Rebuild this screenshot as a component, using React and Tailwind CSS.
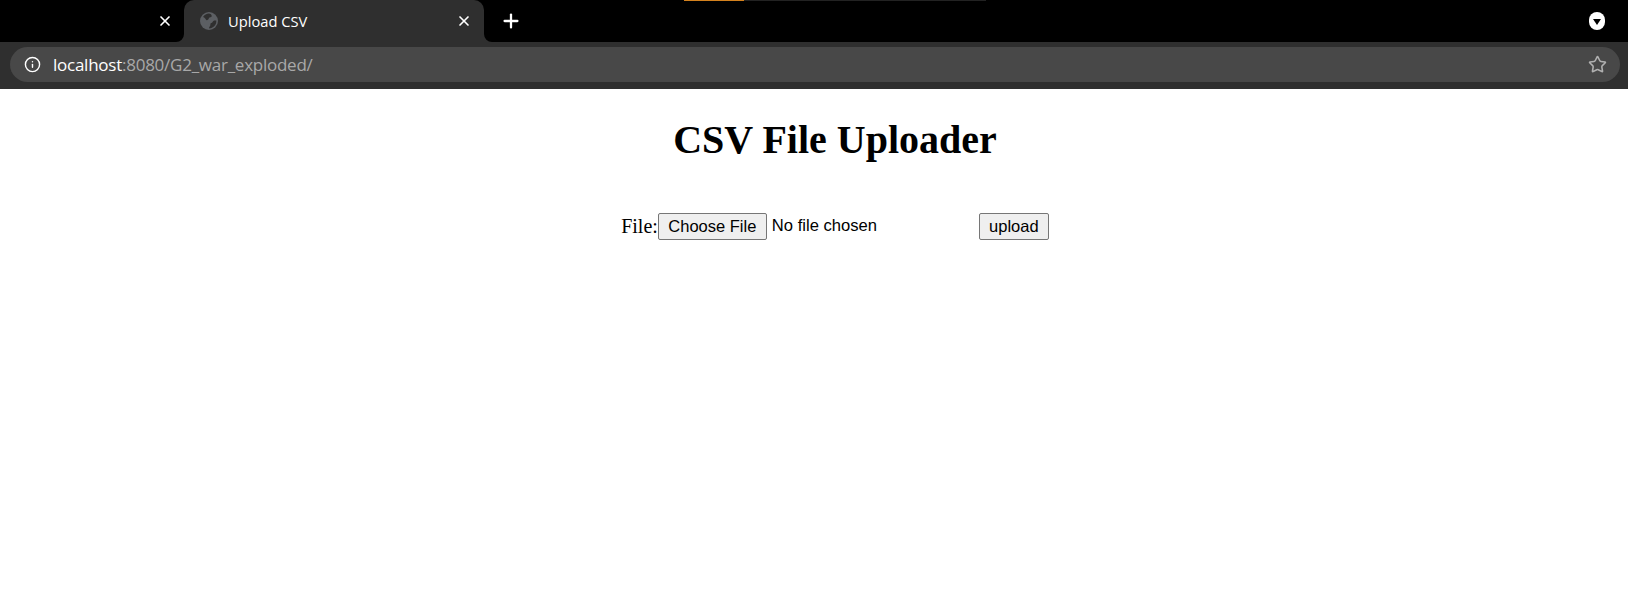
import React from 'react';
import { X, Plus, Star, Info } from 'lucide-react';

const TabCorner = ({ side }) => (
  <svg
    width="8"
    height="8"
    viewBox="0 0 8 8"
    className={`absolute bottom-0 ${side === 'left' ? 'left-[-8px]' : 'right-[-8px]'}`}
  >
    <path d={side === 'left' ? 'M8 0V8H0A8 8 0 0 0 8 0Z' : 'M0 0V8H8A8 8 0 0 1 0 0Z'} fill="#2f2f2f" />
  </svg>
);

// default favicon: a filled earth with dark land shapes
const EarthIcon = () => (
  <svg width="18" height="18" viewBox="0 0 18 18" className="shrink-0">
    <circle cx="9" cy="9" r="9" fill="#5c5f63" />
    <path d="M9 1.6C6.5 1.8 4.4 3 3 4.9c.9.2 1.5.9 2.2 1.5.6.5.5 1.2 1.1 1.6.8.5 1.8-.1 2.3-.9.3-.5.2-1.1.7-1.5.7-.5 1.6-.3 2.2-.9.4-.5.2-1.1-.1-1.6C10.9 2.1 10 1.7 9 1.6Z" fill="#2f2f2f" />
    <path d="M16.3 8.6c-.7-.3-1.6-.3-2.3 0-.8.4-1 1.3-1.7 1.8-.5.4-1.2.4-1.6.9-.5.7-.2 1.6-.5 2.4-.2.6-.8 1-1 1.6-.1.4 0 .8.1 1.1 3.8-.1 6.9-3 7-6.8 0-.3 0-.7 0-1Z" fill="#2f2f2f" />
  </svg>
);

const App = () => {
  return (
    <div className="min-h-[612px] bg-white font-['Liberation_Serif',serif] text-black">
      {/* Browser chrome */}
      <div className="bg-[#2f2f2f] h-[89px] flex flex-col">
        <div className="relative h-[42px] bg-black flex items-end pl-[184px] font-['Open_Sans',sans-serif]">
          <div className="absolute top-0 left-[684px] w-[302px] h-px bg-[#222222]">
            <div className="w-[60px] h-px bg-[#d4821e]" />
          </div>
          <X className="absolute left-[157px] top-[13px] text-white" size={16} strokeWidth={2.5} />
          <div className="relative w-[300px] h-[42px] bg-[#2f2f2f] rounded-t-[10px] flex items-center pl-[16px] pr-[12px]">
            <TabCorner side="left" />
            <EarthIcon />
            <span className="ml-[10px] text-[14.7px] text-white flex-1">Upload CSV</span>
            <X className="text-white" size={16} strokeWidth={2.5} />
            <TabCorner side="right" />
          </div>
          <div className="h-[42px] flex items-center ml-[16px]">
            <Plus className="text-white" size={22} strokeWidth={2.5} />
          </div>
          <div className="ml-auto mr-[23px] h-[42px] flex items-center">
            <div className="w-[16px] h-[18px] rounded-full bg-white flex items-center justify-center">
              <div className="w-0 h-0 border-x-[4px] border-x-transparent border-t-[6px] border-t-black mt-[1px]" />
            </div>
          </div>
        </div>
        <div className="ml-[10px] mr-[8px] mt-[5px] h-[35px] bg-[#484848] rounded-full flex items-center pl-[14px] pr-[13px] font-['Open_Sans',sans-serif]">
          <Info size={17} className="text-white shrink-0" strokeWidth={2} />
          <span className="ml-[12px] text-[17px] tracking-[-0.25px] text-white">localhost<span className="text-[#a8a8a8]">:8080/G2_war_exploded/</span></span>
          <Star size={19} className="ml-auto text-[#b0b0b0]" strokeWidth={2} />
        </div>
      </div>
      {/* Page */}
      <div className="pl-[42px]">
        <h1 className="mt-[24px] text-center text-[40px] font-bold leading-[54px]">CSV File Uploader</h1>
        <form className="mt-[44px] flex justify-center items-center text-[20px]">
          <label>File:</label>
          <button type="button" className="h-[27px] w-[109px] border border-[#767676] rounded-[2px] bg-[#efefef] font-['Liberation_Sans',sans-serif] text-[16.5px] leading-none">Choose File</button>
          <span className="ml-[5px] w-[207px] font-['Liberation_Sans',sans-serif] text-[16.6px]">No file chosen</span>
          <button type="button" className="h-[27px] w-[70px] border border-[#767676] rounded-[2px] bg-[#efefef] font-['Liberation_Sans',sans-serif] text-[16.5px] leading-none">upload</button>
        </form>
      </div>
    </div>
  );
};

export default App;
